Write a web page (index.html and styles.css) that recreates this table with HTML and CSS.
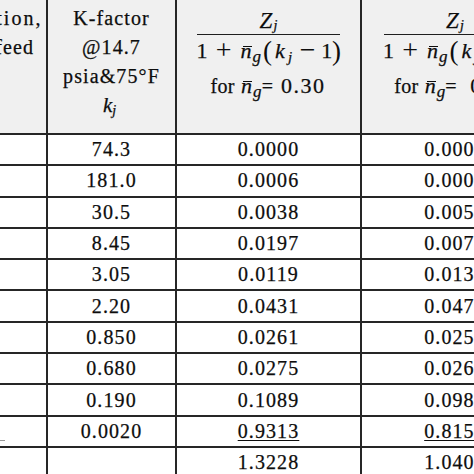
FILE: index.html
```html
<!DOCTYPE html>
<html>
<head>
<meta charset="utf-8">
<link rel="stylesheet" href="styles.css">
</head>
<body>
<div class="table">
  <div class="cell head c1">
    <div class="hl l1">Mole fraction,</div>
    <div class="hl l2">z<sub>j</sub> in the feed</div>
  </div>
  <div class="cell head kf">
    <div class="hl">K-factor</div>
    <div class="hl">@14.7</div>
    <div class="hl">psia&amp;75°F</div>
    <div class="hl kj"><span class="mi">k</span><span class="ksub">j</span></div>
  </div>
  <div class="cell head frac">
    <div class="num"><span class="t zz">Z</span><span class="t zj">j</span></div>
    <div class="bar"></div>
    <div class="den"><span class="t one1">1</span><span class="t plus">+</span><span class="t nbar">n</span><span class="t gsub">g</span><span class="t lp">(</span><span class="t kk">k</span><span class="t jsub">j</span><span class="t minus">−</span><span class="t one2">1</span><span class="t rp">)</span></div>
    <div class="for"><span class="t forw">for</span><span class="t nbar nb2">n</span><span class="t gsub gs2">g</span><span class="t eq">=</span><span class="t val">0.30</span></div>
  </div>
  <div class="cell head frac f4">
    <div class="num"><span class="t zz">Z</span><span class="t zj">j</span></div>
    <div class="bar"></div>
    <div class="den"><span class="t one1">1</span><span class="t plus">+</span><span class="t nbar">n</span><span class="t gsub">g</span><span class="t lp">(</span><span class="t kk">k</span><span class="t jsub">j</span><span class="t minus">−</span><span class="t one2">1</span><span class="t rp">)</span></div>
    <div class="for"><span class="t forw">for</span><span class="t nbar nb2">n</span><span class="t gsub gs2">g</span><span class="t eq">=</span><span class="t val v4">0.60</span></div>
  </div>

  <div class="cell c1b">0.0003</div><div class="cell">74.3</div><div class="cell">0.0000</div><div class="cell">0.0000</div>
  <div class="cell c1b">0.0011</div><div class="cell">181.0</div><div class="cell">0.0006</div><div class="cell">0.0003</div>
  <div class="cell c1b">0.0052</div><div class="cell">30.5</div><div class="cell">0.0038</div><div class="cell">0.0052</div>
  <div class="cell c1b">0.0118</div><div class="cell">8.45</div><div class="cell">0.0197</div><div class="cell">0.0079</div>
  <div class="cell c1b">0.0120</div><div class="cell">3.05</div><div class="cell">0.0119</div><div class="cell">0.0134</div>
  <div class="cell c1b">0.0492</div><div class="cell">2.20</div><div class="cell">0.0431</div><div class="cell">0.0476</div>
  <div class="cell c1b">0.0245</div><div class="cell">0.850</div><div class="cell">0.0261</div><div class="cell">0.0253</div>
  <div class="cell c1b">0.0252</div><div class="cell">0.680</div><div class="cell">0.0275</div><div class="cell">0.0266</div>
  <div class="cell c1b">0.0912</div><div class="cell">0.190</div><div class="cell">0.1089</div><div class="cell">0.0985</div>
  <div class="cell c1u"><span class="u u1">0.7375&nbsp;</span></div><div class="cell">0.0020</div><div class="cell"><span class="u">0.9313</span></div><div class="cell"><span class="u">0.8150</span></div>
  <div class="cell c1b">1.0000</div><div class="cell"></div><div class="cell">1.3228</div><div class="cell">1.0403</div>
</div>
</body>
</html>
```
FILE: styles.css
```css
html, body {
  margin: 0;
  padding: 0;
  overflow: hidden;
  background: #ffffff;
}

body {
  font-family: "Liberation Serif", "Times New Roman", serif;
  font-size: 20px;
  color: #0d0d0d;
  letter-spacing: 1.1px;
  -webkit-text-stroke: 0.25px #0d0d0d;
}

.table {
  display: grid;
  grid-template-columns: 146px 127px 183px 186px;
  grid-template-rows: 133px repeat(11, 29.3px);
  gap: 2px;
  background: #262626;
  margin-left: -100px;
  width: max-content;
}

.cell {
  background: #ffffff;
  display: flex;
  align-items: center;
  justify-content: center;
  white-space: nowrap;
}

.cell.head {
  background: #f0f0f0;
  display: block;
  padding-top: 4px;
}

.hl {
  line-height: 29px;
  height: 29px;
}

.c1 {
  text-align: right;
  padding-right: 9px;
}

.c1 .l1 {
  letter-spacing: 2px;
}

.c1 .l2 {
  padding-right: 3px;
}

.c1 sub {
  font-size: 14px;
  font-style: italic;
}

.c1b {
  justify-content: flex-end;
  padding-right: 48px;
}

.c1u {
  justify-content: flex-end;
  padding-right: 41px;
}

.kf {
  text-align: center;
}

.kj {
  letter-spacing: 0;
  padding-right: 4px;
}

.mi {
  font-style: italic;
  font-size: 21px;
}

.ksub {
  font-style: italic;
  font-size: 14px;
  vertical-align: -3px;
}

.u {
  text-decoration: underline;
  text-decoration-thickness: 1.3px;
  text-underline-offset: 2px;
}

.u1 {
  text-decoration-color: #9a9a9a;
}

/* fraction headers */
.cell.frac {
  padding-top: 0;
  display: flex;
  flex-direction: column;
  align-items: center;
  justify-content: flex-start;
  letter-spacing: 0;
}

.num {
  padding-top: 9px;
  line-height: 23.5px;
  font-size: 21px;
  white-space: nowrap;
}

.bar {
  width: 143px;
  height: 1.5px;
  flex: none;
  background: #1e1e1e;
}

.den {
  padding-top: 1px;
  line-height: 30px;
  font-size: 22px;
  white-space: nowrap;
}

.for {
  padding-top: 5px;
  line-height: 30px;
  font-size: 20px;
  white-space: nowrap;
}

.t {
  display: inline-flex;
  justify-content: center;
  line-height: 1;
}

.zz { width: 15px; font-style: italic; font-size: 23px; }
.zj { width: 6.7px; margin-left: -1.3px; font-style: italic; font-size: 14px; vertical-align: -2px; }

.one1 { width: 10px; }
.plus { width: 16.7px; margin-left: 8.3px; font-size: 28px; vertical-align: -1px; -webkit-text-stroke: 0; }
.nbar { width: 11.7px; margin-left: 8.3px; font-style: italic; position: relative; }
.nbar::after {
  content: "";
  position: absolute;
  left: 2.5px;
  right: 0;
  top: 6px;
  height: 1.3px;
  background: currentColor;
}
.gsub { width: 10px; font-style: italic; font-size: 17px; vertical-align: -4px; }
.lp { width: 8.7px; margin-left: 1.3px; font-size: 27px; vertical-align: -2px; -webkit-text-stroke: 0; }
.kk { width: 13.7px; margin-left: 1.3px; font-style: italic; }
.jsub { width: 6.3px; font-style: italic; font-size: 15px; vertical-align: -4px; }
.minus { width: 15px; margin-left: 7px; font-size: 28px; vertical-align: -1px; -webkit-text-stroke: 0; }
.one2 { width: 10px; margin-left: 6.7px; }
.rp { width: 7px; margin-left: 1.3px; font-size: 27px; vertical-align: -2px; -webkit-text-stroke: 0; }

.forw { width: 22.6px; letter-spacing: 0.3px; }
.nb2 { margin-left: 6.7px; font-size: 22px; }
.gs2 { font-size: 17px; }
.eq { width: 10px; font-size: 20px; }
.val { width: 45px; margin-left: 8.3px; font-size: 22px; letter-spacing: 1.5px; }
.v4 { margin-left: 14px; }
```
